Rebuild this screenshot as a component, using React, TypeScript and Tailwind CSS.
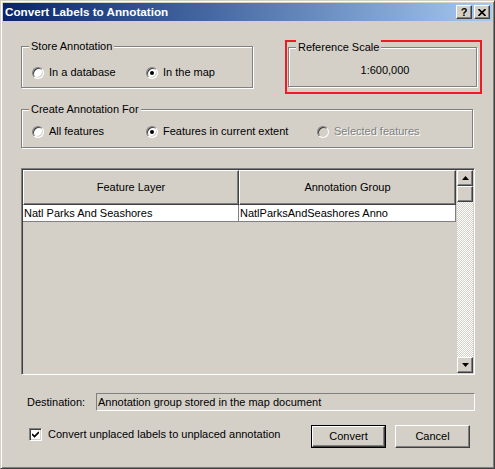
import React from "react";

const raised =
  "border border-t-white border-l-white border-r-[#404040] border-b-[#404040] shadow-[inset_-1px_-1px_0_#808080] bg-[#d4d0c8]";
const etched =
  "relative border border-[#808080] shadow-[inset_1px_1px_0_#fff,1px_1px_0_#fff]";

const GroupLabel = ({ children }: { children: React.ReactNode }) => (
  <span className="absolute left-[7px] -top-[8px] bg-[#d4d0c8] px-[2px] leading-[14px] text-black">
    {children}
  </span>
);

const Radio = ({
  label,
  checked,
  disabled,
  width,
}: {
  label: string;
  checked?: boolean;
  disabled?: boolean;
  width?: string;
}) => (
  <div className={`flex shrink-0 items-center ${width ?? ""}`}>
    <div
      className={`relative flex h-[12px] w-[12px] items-center justify-center rounded-full border border-t-[#808080] border-l-[#808080] border-r-white border-b-white shadow-[inset_1px_1px_0_#404040,inset_-1px_-1px_0_#d4d0c8] ${
        disabled ? "bg-[#d4d0c8]" : "bg-white"
      }`}
    >
      {checked && <div className="h-[4px] w-[4px] rounded-full bg-black" />}
    </div>
    <span
      className={`ml-[5px] leading-[13px] ${
        disabled ? "text-[#808080] [text-shadow:1px_1px_0_#fff]" : "text-black"
      }`}
    >
      {label}
    </span>
  </div>
);

const ScrollButton = ({ up }: { up?: boolean }) => (
  <div className={`flex h-[16px] w-[16px] shrink-0 items-center justify-center ${raised}`}>
    <svg width="7" height="4" viewBox="0 0 7 4">
      {up ? (
        <path d="M3.5 0 L7 4 L0 4 Z" fill="#000" />
      ) : (
        <path d="M0 0 L7 0 L3.5 4 Z" fill="#000" />
      )}
    </svg>
  </div>
);

export default function App() {
  return (
    <div className="h-[469px] w-[495px] overflow-hidden bg-white">
      <div className="flex h-[469px] w-[495px] flex-col border border-t-[#d4d0c8] border-l-[#d4d0c8] border-r-[#404040] border-b-[#404040] bg-[#d4d0c8] p-[2px] font-['Liberation_Sans',Arial,sans-serif] text-[11px] shadow-[inset_1px_1px_0_#fff,inset_-1px_-1px_0_#808080]">
        {/* title bar */}
        <div className="flex h-[18px] shrink-0 items-center bg-gradient-to-r from-[#0a246a] to-[#a6caf0] pl-[2px] pr-[2px]">
          <span className="text-[11.7px] font-bold leading-none text-white">
            Convert Labels to Annotation
          </span>
          <div className={`ml-auto flex h-[14px] w-[16px] items-center justify-center ${raised}`}>
            <span className="text-[11px] font-bold leading-none text-black">?</span>
          </div>
          <div className={`ml-[2px] flex h-[14px] w-[16px] items-center justify-center ${raised}`}>
            <svg width="8" height="7" viewBox="0 0 8 7">
              <path d="M0.5 0 L7.5 7 M7.5 0 L0.5 7" stroke="#000" strokeWidth="1.6" />
            </svg>
          </div>
        </div>

        <div className="flex flex-col pl-[18px] pr-[17px]">
          {/* row 1 */}
          <div className="mt-[25px] flex items-start">
            <div className={`h-[42px] w-[232px] shrink-0 ${etched}`}>
              <GroupLabel>Store Annotation</GroupLabel>
              <div className="flex pl-[10px] pt-[19px]">
                <Radio label="In a database" width="w-[114px]" />
                <Radio label="In the map" checked />
              </div>
            </div>
            <div className={`ml-[35px] mt-[1px] h-[40px] w-[189px] shrink-0 ${etched}`}>
              <div className="pointer-events-none absolute -left-[4px] -top-[8px] -right-[6px] -bottom-[8px] border-2 border-[#ed1c24]" />
              <GroupLabel>Reference Scale</GroupLabel>
              <div className="pl-[5px] pt-[16px] text-center leading-[13px] text-black">
                1:600,000
              </div>
            </div>
          </div>

          {/* row 2 */}
          <div className={`mt-[21px] h-[39px] w-[452px] ${etched}`}>
            <GroupLabel>Create Annotation For</GroupLabel>
            <div className="flex pl-[10px] pt-[15px]">
              <Radio label="All features" width="w-[114px]" />
              <Radio label="Features in current extent" checked width="w-[171px]" />
              <Radio label="Selected features" disabled />
            </div>
          </div>

          {/* grid */}
          <div className="mt-[20px] flex h-[207px] w-[454px] border border-t-[#808080] border-l-[#808080] border-r-white border-b-white p-[1px] shadow-[inset_1px_1px_0_#404040,inset_-1px_-1px_0_#d4d0c8]">
            <div className="flex flex-1 flex-col">
              <div className="flex h-[35px]">
                <div className="flex w-[216px] items-center justify-center border border-t-white border-l-white border-r-[#404040] border-b-[#404040] shadow-[inset_-1px_-1px_0_#808080] text-black">
                  Feature Layer
                </div>
                <div className="flex w-[217px] items-center justify-center border border-t-white border-l-white border-r-[#404040] border-b-[#404040] shadow-[inset_-1px_-1px_0_#808080] text-black">
                  Annotation Group
                </div>
              </div>
              <div className="flex h-[17px]">
                <div className="w-[216px] border-r border-b border-[#808080] bg-white pl-[1px] leading-[16px] text-black">
                  Natl Parks And Seashores
                </div>
                <div className="w-[217px] border-r border-b border-[#808080] bg-white pl-[1px] leading-[16px] text-black">
                  NatlParksAndSeashores Anno
                </div>
              </div>
            </div>
            <div className="flex w-[16px] flex-col">
              <ScrollButton up />
              <div className={`h-[16px] w-[16px] shrink-0 ${raised}`} />
              <div className="flex-1 bg-[repeating-conic-gradient(#fff_0_25%,#d4d0c8_0_50%)] bg-[length:2px_2px]" />
              <ScrollButton />
            </div>
          </div>

          {/* destination */}
          <div className="mt-[18px] flex h-[18px] items-center">
            <span className="ml-[6px] w-[69px] shrink-0 text-black">Destination:</span>
            <div className="flex h-[18px] flex-1 items-center border border-t-[#808080] border-l-[#808080] border-r-white border-b-white pl-[1px] text-black">
              Annotation group stored in the map document
            </div>
          </div>

          {/* bottom row */}
          <div className="mt-[14px] flex h-[23px] items-start">
            <div className="ml-[8px] mt-[3px] flex items-center">
              <div className="flex h-[13px] w-[13px] items-center justify-center border border-t-[#808080] border-l-[#808080] border-r-white border-b-white bg-white shadow-[inset_1px_1px_0_#404040,inset_-1px_-1px_0_#d4d0c8]">
                <svg width="7" height="7" viewBox="0 0 7 7">
                  <path d="M0 3 L2.5 5.5 L7 1" stroke="#000" strokeWidth="1.7" fill="none" />
                </svg>
              </div>
              <span className="ml-[6px] leading-[13px] text-black">
                Convert unplaced labels to unplaced annotation
              </span>
            </div>
            <div className="ml-auto flex h-[23px] w-[75px] items-center justify-center border border-black">
              <div className={`flex h-[21px] w-[73px] items-center justify-center text-black ${raised}`}>
                Convert
              </div>
            </div>
            <div className={`ml-[9px] mr-[5px] flex h-[23px] w-[75px] items-center justify-center text-black ${raised}`}>
              Cancel
            </div>
          </div>
        </div>
      </div>
    </div>
  );
}
